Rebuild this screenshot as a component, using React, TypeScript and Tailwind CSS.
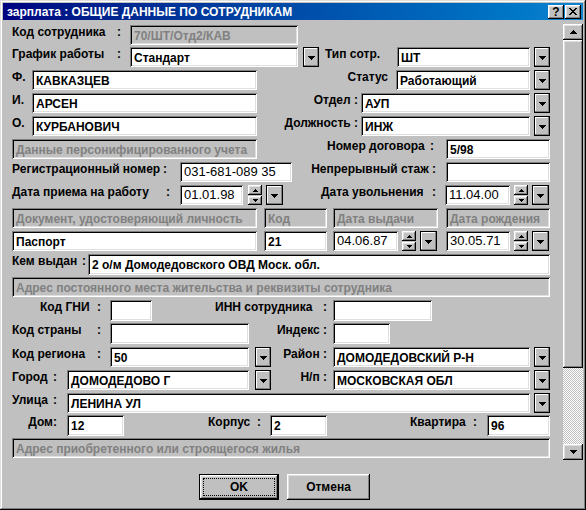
import React from "react";

const sunken =
  "shadow-[inset_1px_1px_0_#808080,inset_-1px_-1px_0_#ffffff,inset_2px_2px_0_#000000,inset_-2px_-2px_0_#dfdfdf]";
const raised =
  "shadow-[inset_-1px_-1px_0_#000000,inset_1px_1px_0_#ffffff,inset_-2px_-2px_0_#808080,inset_2px_2px_0_#dfdfdf]";
const raisedThin = "shadow-[inset_-1px_-1px_0_#808080,inset_1px_1px_0_#ffffff]";

function DownTri() {
  return (
    <svg width="7" height="4" viewBox="0 0 7 4" shapeRendering="crispEdges">
      <rect x="0" y="0" width="7" height="1" fill="#000" />
      <rect x="1" y="1" width="5" height="1" fill="#000" />
      <rect x="2" y="2" width="3" height="1" fill="#000" />
      <rect x="3" y="3" width="1" height="1" fill="#000" />
    </svg>
  );
}
function UpTri() {
  return (
    <svg width="7" height="4" viewBox="0 0 7 4" shapeRendering="crispEdges">
      <rect x="3" y="0" width="1" height="1" fill="#000" />
      <rect x="2" y="1" width="3" height="1" fill="#000" />
      <rect x="1" y="2" width="5" height="1" fill="#000" />
      <rect x="0" y="3" width="7" height="1" fill="#000" />
    </svg>
  );
}
function SmallUp() {
  return (
    <svg width="5" height="3" viewBox="0 0 5 3" shapeRendering="crispEdges">
      <rect x="2" y="0" width="1" height="1" fill="#000" />
      <rect x="1" y="1" width="3" height="1" fill="#000" />
      <rect x="0" y="2" width="5" height="1" fill="#000" />
    </svg>
  );
}
function SmallDown() {
  return (
    <svg width="5" height="3" viewBox="0 0 5 3" shapeRendering="crispEdges">
      <rect x="0" y="0" width="5" height="1" fill="#000" />
      <rect x="1" y="1" width="3" height="1" fill="#000" />
      <rect x="2" y="2" width="1" height="1" fill="#000" />
    </svg>
  );
}

function Field({
  className = "",
  children,
  thin = false,
  gray = false,
}: {
  className?: string;
  children?: React.ReactNode;
  thin?: boolean;
  gray?: boolean;
}) {
  return (
    <div
      className={`${sunken} ${gray ? "bg-[#c0c0c0] text-[#808080]" : "bg-white text-black"} ${
        thin ? "font-normal text-[13px] pt-[3px]" : "font-bold text-[12px] pt-[4px]"
      } h-full shrink-0 pl-[4px] leading-[14px] whitespace-nowrap overflow-hidden ${className}`}
    >
      {children}
    </div>
  );
}

function DropBtn({ className = "" }: { className?: string }) {
  return (
    <div className={`h-full shrink-0 border border-black bg-[#c0c0c0] ${className}`}>
      <div className={`w-full h-full ${raisedThin} flex items-center justify-center pt-[2px]`}>
        <DownTri />
      </div>
    </div>
  );
}

function Spin({ className = "" }: { className?: string }) {
  return (
    <div className={`h-full shrink-0 flex flex-col gap-[1px] ${className}`}>
      <div className={`h-[10px] bg-[#c0c0c0] ${raised} flex items-center justify-center`}>
        <SmallUp />
      </div>
      <div className={`h-[9px] bg-[#c0c0c0] ${raised} flex items-center justify-center`}>
        <SmallDown />
      </div>
    </div>
  );
}

function Label({ className = "", children }: { className?: string; children: React.ReactNode }) {
  return (
    <div className={`shrink-0 text-[12px] leading-[14px] font-bold text-black whitespace-nowrap ${className}`}>
      {children}
    </div>
  );
}

function LC({ text, className = "" }: { text: string; className?: string }) {
  return (
    <Label className={`flex justify-between ${className}`}>
      <span>{text}</span>
      <span>:</span>
    </Label>
  );
}

export default function App() {
  return (
    <div className="w-[586px] h-[510px] overflow-hidden bg-[#c0c0c0] font-['Liberation_Sans',Arial,sans-serif] shadow-[inset_-1px_-1px_0_#000000,inset_1px_1px_0_#dfdfdf,inset_-2px_-2px_0_#808080,inset_2px_2px_0_#ffffff] flex flex-col">
      {/* title bar */}
      <div className="mx-[3px] mt-[3px] h-[17px] shrink-0 bg-linear-to-r from-[#000080] to-[#1084d0] flex items-center">
        <div className="ml-[4px] text-white font-bold text-[12px] leading-[14px] whitespace-nowrap">
          зарплата : ОБЩИЕ ДАННЫЕ ПО СОТРУДНИКАМ
        </div>
        <div className="ml-auto mr-[2px] flex items-center">
          <div className={`w-[16px] h-[14px] bg-[#c0c0c0] ${raised} flex items-center justify-center text-[12px] font-bold leading-none text-black`}>
            ?
          </div>
          <div className={`ml-[1px] w-[16px] h-[14px] bg-[#c0c0c0] ${raised} flex items-center justify-center`}>
            <svg width="8" height="7" viewBox="0 0 8 7" shapeRendering="crispEdges">
              <path d="M0 0h2v1h-2zM6 0h2v1h-2zM1 1h2v1h-2zM5 1h2v1h-2zM2 2h4v1h-4zM3 3h2v1h-2zM2 4h4v1h-4zM1 5h2v1h-2zM5 5h2v1h-2zM0 6h2v1h-2zM6 6h2v1h-2z" fill="#000" />
            </svg>
          </div>
        </div>
      </div>

      {/* body */}
      <div className="flex">
        <div className="w-[560px] shrink-0 flex flex-col">
          {/* R1 */}
          <div className="mt-[5px] h-[20px] flex items-start">
            <LC text="Код сотрудника" className="ml-[12px] w-[109px]" />
            <Field gray className="ml-[9px] w-[168px]">70/ШТ/Отд2/КАВ</Field>
          </div>
          {/* R2 */}
          <div className="mt-[2px] h-[20px] flex items-start">
            <LC text="График работы" className="ml-[12px] w-[109px]" />
            <Field className="ml-[9px] w-[168px]">Стандарт</Field>
            <DropBtn className="ml-[5px] w-[16px]" />
            <Label className="ml-[6px] w-[68px]">Тип сотр.</Label>
            <Field className="ml-[4px] w-[133px]">ШТ</Field>
            <DropBtn className="ml-[4px] w-[16px]" />
          </div>
          {/* R3 */}
          <div className="mt-[3px] h-[20px] flex items-start">
            <Label className="ml-[12px] w-[16px]">Ф.</Label>
            <Field className="ml-[4px] w-[225px]">КАВКАЗЦЕВ</Field>
            <Label className="w-[131px] text-right">Статус</Label>
            <Field className="ml-[8px] w-[134px]">Работающий</Field>
            <DropBtn className="ml-[4px] w-[16px]" />
          </div>
          {/* R4 */}
          <div className="mt-[3px] h-[20px] flex items-start">
            <Label className="ml-[12px] w-[16px]">И.</Label>
            <Field className="ml-[4px] w-[225px]">АРСЕН</Field>
            <Label className="w-[101px] text-right">Отдел :</Label>
            <Field className="ml-[3px] w-[169px]">АУП</Field>
            <DropBtn className="ml-[4px] w-[16px]" />
          </div>
          {/* R5 */}
          <div className="mt-[3px] h-[20px] flex items-start">
            <Label className="ml-[12px] w-[16px]">О.</Label>
            <Field className="ml-[4px] w-[225px]">КУРБАНОВИЧ</Field>
            <Label className="w-[101px] text-right">Должность :</Label>
            <Field className="ml-[3px] w-[169px]">ИНЖ</Field>
            <DropBtn className="ml-[4px] w-[16px]" />
          </div>
          {/* R6 */}
          <div className="mt-[3px] h-[20px] flex items-start">
            <Field gray className="ml-[12px] w-[245px]">Данные персонифицированного учета</Field>
            <LC text="Номер договора" className="ml-[70px] w-[107px]" />
            <Field className="ml-[12px] w-[104px]">5/98</Field>
          </div>
          {/* R7 */}
          <div className="mt-[3px] h-[20px] flex items-start">
            <LC text="Регистрационный номер" className="ml-[12px] w-[155px]" />
            <Field thin className="ml-[13px] w-[112px]">031-681-089 35</Field>
            <Label className="w-[144px] text-right">Непрерывный стаж :</Label>
            <Field className="ml-[10px] w-[104px]"></Field>
          </div>
          {/* R8 */}
          <div className="mt-[3px] h-[20px] flex items-start">
            <LC text="Дата приема на работу" className="ml-[12px] w-[158px]" />
            <Field thin className="ml-[10px] w-[63px]">01.01.98</Field>
            <Spin className="ml-[5px] w-[14px]" />
            <DropBtn className="ml-[4px] w-[17px]" />
            <LC text="Дата увольнения" className="ml-[38px] w-[115px]" />
            <Field thin className="ml-[9px] w-[65px]">11.04.00</Field>
            <Spin className="ml-[4px] w-[14px]" />
            <DropBtn className="ml-[4px] w-[17px]" />
          </div>
          {/* R9 */}
          <div className="mt-[3px] h-[20px] flex items-start">
            <Field gray className="ml-[12px] w-[245px]">Документ, удостоверяющий личность</Field>
            <Field gray className="ml-[7px] w-[63px]">Код</Field>
            <Field gray className="ml-[6px] w-[105px]">Дата выдачи</Field>
            <Field gray className="ml-[8px] w-[104px]">Дата рождения</Field>
          </div>
          {/* R10 */}
          <div className="mt-[3px] h-[20px] flex items-start">
            <Field className="ml-[12px] w-[245px]">Паспорт</Field>
            <Field className="ml-[7px] w-[63px]">21</Field>
            <Field thin className="ml-[6px] w-[65px]">04.06.87</Field>
            <Spin className="ml-[4px] w-[14px]" />
            <DropBtn className="ml-[4px] w-[17px]" />
            <Field thin className="ml-[9px] w-[64px]">30.05.71</Field>
            <Spin className="ml-[4px] w-[14px]" />
            <DropBtn className="ml-[4px] w-[17px]" />
          </div>
          {/* R11 */}
          <div className="mt-[3px] h-[21px] flex items-start">
            <LC text="Кем выдан" className="ml-[12px] w-[74px]" />
            <Field className="ml-[2px] w-[462px]">2 о/м Домодедовского ОВД Моск. обл.</Field>
          </div>
          {/* R12 */}
          <div className="mt-[2px] h-[20px] flex items-start">
            <Field gray className="ml-[12px] w-[538px]">
              Адрес постоянного места жительства и реквизиты сотрудника
            </Field>
          </div>
          {/* R13 */}
          <div className="mt-[3px] h-[21px] flex items-start">
            <LC text="Код ГНИ" className="ml-[40px] w-[61px]" />
            <Field className="ml-[9px] w-[42px]"></Field>
            <LC text="ИНН сотрудника" className="ml-[63px] w-[112px]" />
            <Field className="ml-[6px] w-[99px]"></Field>
          </div>
          {/* R14 */}
          <div className="mt-[2px] h-[21px] flex items-start">
            <LC text="Код страны" className="ml-[12px] w-[89px]" />
            <Field className="ml-[9px] w-[139px]"></Field>
            <Label className="w-[78px] text-right">Индекс :</Label>
            <Field className="ml-[6px] w-[57px]"></Field>
          </div>
          {/* R15 */}
          <div className="mt-[3px] h-[20px] flex items-start">
            <LC text="Код региона" className="ml-[12px] w-[89px]" />
            <Field className="ml-[9px] w-[139px]">50</Field>
            <DropBtn className="ml-[6px] w-[16px]" />
            <Label className="w-[56px] text-right">Район :</Label>
            <Field className="ml-[6px] w-[197px]">ДОМОДЕДОВСКИЙ Р-Н</Field>
            <DropBtn className="ml-[4px] w-[16px]" />
          </div>
          {/* R16 */}
          <div className="mt-[3px] h-[20px] flex items-start">
            <LC text="Город" className="ml-[12px] w-[45px]" />
            <Field className="ml-[10px] w-[182px]">ДОМОДЕДОВО Г</Field>
            <DropBtn className="ml-[6px] w-[16px]" />
            <Label className="w-[56px] text-right">Н/п :</Label>
            <Field className="ml-[6px] w-[197px]">МОСКОВСКАЯ ОБЛ</Field>
            <DropBtn className="ml-[4px] w-[16px]" />
          </div>
          {/* R17 */}
          <div className="mt-[3px] h-[20px] flex items-start">
            <LC text="Улица" className="ml-[12px] w-[45px]" />
            <Field className="ml-[10px] w-[463px]">ЛЕНИНА УЛ</Field>
            <DropBtn className="ml-[4px] w-[16px]" />
          </div>
          {/* R18 */}
          <div className="mt-[2px] h-[21px] flex items-start">
            <Label className="ml-[12px] w-[45px] text-right">Дом:</Label>
            <Field className="ml-[10px] w-[57px]">12</Field>
            <LC text="Корпус" className="ml-[84px] w-[53px]" />
            <Field className="ml-[9px] w-[57px]">2</Field>
            <LC text="Квартира" className="ml-[83px] w-[67px]" />
            <Field className="ml-[10px] w-[63px]">96</Field>
          </div>
          {/* R19 */}
          <div className="mt-[2px] h-[20px] flex items-start">
            <Field gray className="ml-[12px] w-[538px]">Адрес приобретенного или строящегося жилья</Field>
          </div>
          {/* buttons */}
          <div className="mt-[16px] h-[26px] flex items-start">
            <div className="ml-[199px] w-[80px] h-full border border-black bg-[#c0c0c0]">
              <div className={`w-full h-full ${raised} p-[3px]`}>
                <div className="w-full h-full border border-dotted border-black flex items-center justify-center text-[12px] font-bold leading-none text-black">
                  OK
                </div>
              </div>
            </div>
            <div className={`ml-[8px] w-[83px] h-full bg-[#c0c0c0] ${raised} flex items-center justify-center text-[12px] font-bold leading-none text-black`}>
              Отмена
            </div>
          </div>
        </div>

        {/* scrollbar */}
        <div className="ml-[3px] mt-[4px] w-[20px] shrink-0 flex flex-col">
          <div className={`h-[16px] bg-[#c0c0c0] ${raised} flex items-center justify-center`}>
            <UpTri />
          </div>
          <div className={`h-[328px] bg-[#c0c0c0] ${raised}`}></div>
          <div className="h-[76px] bg-[repeating-conic-gradient(#c0c0c0_0_25%,#ffffff_0_50%)] bg-size-[2px_2px]"></div>
          <div className={`h-[16px] bg-[#c0c0c0] ${raised} flex items-center justify-center`}>
            <DownTri />
          </div>
        </div>
      </div>
    </div>
  );
}
